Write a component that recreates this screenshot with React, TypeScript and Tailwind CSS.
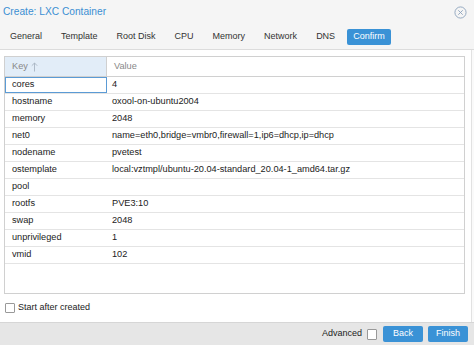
import React from 'react';

const rows: [string, string][] = [
  ['cores', '4'],
  ['hostname', 'oxool-on-ubuntu2004'],
  ['memory', '2048'],
  ['net0', 'name=eth0,bridge=vmbr0,firewall=1,ip6=dhcp,ip=dhcp'],
  ['nodename', 'pvetest'],
  ['ostemplate', 'local:vztmpl/ubuntu-20.04-standard_20.04-1_amd64.tar.gz'],
  ['pool', ''],
  ['rootfs', 'PVE3:10'],
  ['swap', '2048'],
  ['unprivileged', '1'],
  ['vmid', '102'],
];

const tabs = ['General', 'Template', 'Root Disk', 'CPU', 'Memory', 'Network', 'DNS', 'Confirm'];

export default function App() {
  return (
    <div className="w-[474px] h-[345px] flex flex-col bg-[#fafafa] text-[#333] font-['Liberation_Sans',Arial,sans-serif] overflow-hidden">
      {/* Title bar */}
      <div className="h-[24px] flex items-center justify-between pl-[3px] pr-[7px] bg-[#f5f5f5]">
        <span className="text-[10.2px] text-[#3b8fd3]">Create: LXC Container</span>
        <svg width="13" height="13" viewBox="0 0 14 14" className="mt-[1px]">
          <circle cx="7" cy="7" r="6" fill="none" stroke="#8fa4bd" strokeWidth="1" />
          <path d="M4.6 4.6 L9.4 9.4 M9.4 4.6 L4.6 9.4" stroke="#8fa4bd" strokeWidth="1" />
        </svg>
      </div>

      {/* Tabs */}
      <div className="h-[26px] flex items-start pt-[5px] pl-[3px] gap-[2px] bg-[#f5f5f5] border-b border-[#dcdcdc]">
        {tabs.map((t) => (
          <div
            key={t}
            className={
              t === 'Confirm'
                ? 'h-[16px] px-[6px] flex items-center rounded-[2px] bg-[#3a92d6] text-white text-[9px]'
                : 'h-[16px] px-[7px] mr-[3px] flex items-center text-[9px] text-[#333]'
            }
          >
            {t}
          </div>
        ))}
      </div>

      {/* Body */}
      <div className="flex-1 flex flex-col pl-[4px] pr-[3px] pt-[6px] bg-white border-r border-[#e2e2e2] mr-[2px]">
        <div className="w-[461px] h-[238px] border border-[#d0d0d0] bg-white flex flex-col">
          <div className="h-[20px] flex border-b border-[#d0d0d0] text-[9.2px] text-[#888]">
            <div className="w-[102px] bg-[#e2edf8] border-r border-[#d0d0d0] flex items-center pl-[7px] gap-[3px]">
              Key
              <svg width="7" height="10" viewBox="0 0 7 10">
                <path d="M3.5 1 V9.5 M0.8 3.7 L3.5 1 L6.2 3.7" stroke="#a8b4c2" strokeWidth="0.9" fill="none" />
              </svg>
            </div>
            <div className="flex-1 flex items-center pl-[7px]">Value</div>
          </div>
          {rows.map(([k, v], i) => (
            <div key={k} className="h-[17px] flex border-b border-[#e4e4e4] text-[9.2px] text-[#222]">
              <div
                className={
                  i === 0
                    ? 'w-[102px] flex items-center pl-[6px] border border-[#5b9bd5]'
                    : 'w-[102px] flex items-center pl-[7px]'
                }
              >
                {k}
              </div>
              <div className="flex-1 flex items-center pl-[5px]">{v}</div>
            </div>
          ))}
        </div>

        <div className="h-[27px] flex items-center gap-[3px] pl-[1px] pt-[1px]">
          <div className="w-[10px] h-[10px] border border-[#999] bg-white rounded-[1px]" />
          <span className="text-[9px] text-[#222]">Start after created</span>
        </div>
      </div>

      {/* Footer */}
      <div className="h-[23px] flex items-center justify-end gap-[5px] pr-[6px] bg-[#e6e6e6] border-t border-[#d6d6d6]">
        <span className="text-[9px] text-[#222]">Advanced</span>
        <div className="w-[10px] h-[11px] border border-[#999] bg-white rounded-[1px] mr-[1px]" />
        <div className="w-[40px] h-[16px] rounded-[2px] bg-[#3a92d6] text-white text-[9px] flex items-center justify-center">Back</div>
        <div className="w-[40px] h-[16px] rounded-[2px] bg-[#3a92d6] text-white text-[9px] flex items-center justify-center">Finish</div>
      </div>
    </div>
  );
}
